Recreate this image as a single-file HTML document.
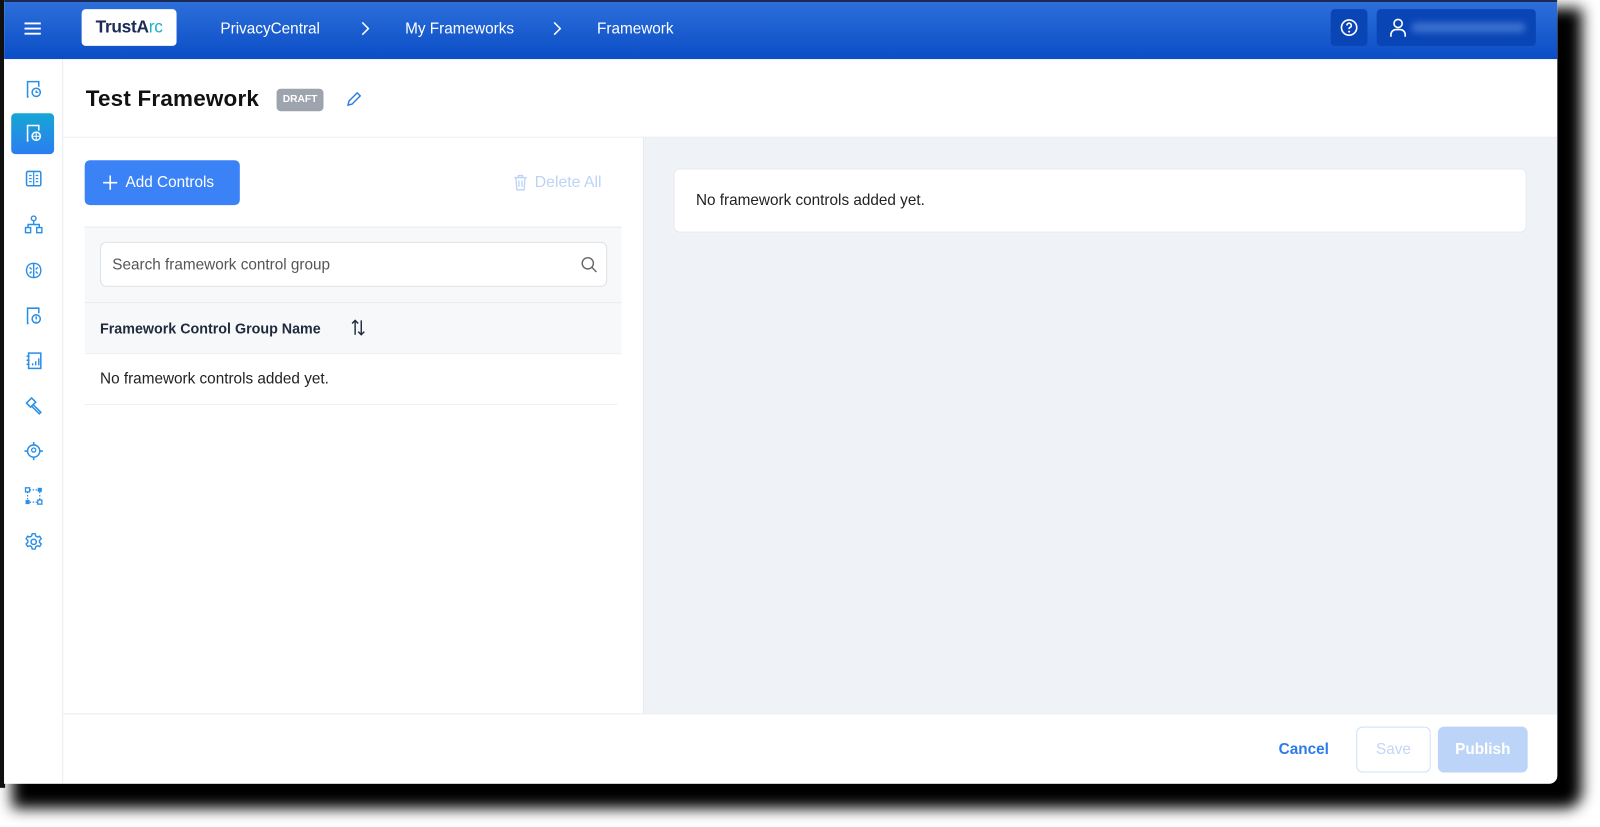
<!DOCTYPE html>
<html><head><meta charset="utf-8">
<style>
*{box-sizing:border-box;margin:0;padding:0}
html,body{width:1600px;height:827px;overflow:hidden;background:#fff;font-family:"Liberation Sans",sans-serif}
#s{position:absolute;left:0;top:0;width:1568px;height:810px;transform:scale(1.0205);transform-origin:0 0}
.abs{position:absolute}
#win{position:absolute;left:4px;top:0;width:1522px;height:768px;background:#fff;border-radius:0 0 8px 0;box-shadow:16px 16px 14px 8px #000;overflow:hidden}
#edge{position:absolute;left:0;top:0;width:5px;height:772px;background:#111}
.hdr{left:0;top:0;width:1522px;height:58px;background:linear-gradient(180deg,#2c6fda,#0b4dc6);border-top:2px solid #1a2a55}
.bc{color:#fff;font-size:15px;top:18px}
.side{left:0;top:58px;width:58px;height:710px;background:#fff;border-right:1px solid #e6e9ef}
.ic{position:absolute;left:19px;width:20px;height:20px}
.t{color:#222}
</style></head><body>
<div id="s">
<div id="edge"></div>
<div id="win">
 <div class="abs hdr">
  <svg class="abs" style="left:19px;top:18px" width="18" height="16" viewBox="0 0 18 16"><path d="M1 3h16M1 8h16M1 13h16" stroke="#fff" stroke-width="1.8"/></svg>
  <div class="abs" style="left:76px;top:7px;width:93px;height:36px;background:#fff;border-radius:4px;text-align:center;line-height:36px;font-size:17px;font-weight:bold;color:#1b2a56;letter-spacing:-0.3px">TrustA<span style="color:#1ab1c9;font-weight:normal">rc</span></div>
  <div class="abs bc" style="left:212px">PrivacyCentral</div>
  <svg class="abs" style="left:350px;top:19px" width="8" height="14" viewBox="0 0 8 14"><path d="M1 1l6 6-6 6" fill="none" stroke="#fff" stroke-width="1.5"/></svg>
  <div class="abs bc" style="left:393px">My Frameworks</div>
  <svg class="abs" style="left:538px;top:19px" width="8" height="14" viewBox="0 0 8 14"><path d="M1 1l6 6-6 6" fill="none" stroke="#fff" stroke-width="1.5"/></svg>
  <div class="abs bc" style="left:581px">Framework</div>
  <div class="abs" style="left:1300px;top:7px;width:36px;height:36px;background:#0a45b6;border-radius:4px">
   <svg class="abs" style="left:9px;top:9px" width="18" height="18" viewBox="0 0 18 18"><circle cx="9" cy="9" r="7.5" fill="none" stroke="#fff" stroke-width="1.6"/><path d="M6.8 7a2.2 2.2 0 1 1 3 2c-.7.3-.8.8-.8 1.5" fill="none" stroke="#fff" stroke-width="1.6"/><circle cx="9" cy="13" r="1" fill="#fff"/></svg>
  </div>
  <div class="abs" style="left:1345px;top:7px;width:156px;height:36px;background:#0a45b6;border-radius:4px">
   <svg class="abs" style="left:12px;top:8px" width="18" height="20" viewBox="0 0 18 20"><circle cx="9" cy="6" r="4" fill="none" stroke="#fff" stroke-width="1.6"/><path d="M2 19v-2a5 5 0 0 1 5-5h4a5 5 0 0 1 5 5v2" fill="none" stroke="#fff" stroke-width="1.6"/></svg>
   <div class="abs" style="left:34px;top:13px;width:112px;height:10px;background:#3b6fcf;border-radius:5px;filter:blur(3px)"></div>
  </div>
 </div>
 <div class="abs side">
  <svg class="ic" style="top:19px" viewBox="0 0 20 20"><path d="M5 18H4V3h11v5" fill="none" stroke="#2b8fe6" stroke-width="1.5"/><circle cx="12.5" cy="13.5" r="4" fill="none" stroke="#2b8fe6" stroke-width="1.5"/><path d="M12.5 11.5v2h2" fill="none" stroke="#2b8fe6" stroke-width="1.3"/></svg>
  <div class="abs" style="left:7px;top:53px;width:42px;height:40px;border-radius:4px;background:linear-gradient(180deg,#16a6d4,#2b7ef1)"></div>
  <svg class="ic" style="top:62px" viewBox="0 0 20 20"><path d="M5 18H4V3h11v5" fill="none" stroke="#fff" stroke-width="1.5"/><circle cx="12.5" cy="13.5" r="4" fill="none" stroke="#fff" stroke-width="1.5"/><path d="M8.5 13.5h8M12.5 9.5v8" stroke="#fff" stroke-width="1"/></svg>
  <svg class="ic" style="top:107px" viewBox="0 0 20 20"><rect x="3" y="3" width="14" height="14" rx="1.5" fill="none" stroke="#2b8fe6" stroke-width="1.5"/><path d="M10 3v14M5.5 7h2.5M5.5 10h2.5M5.5 13h2.5M12 7h2.5M12 10h2.5M12 13h2.5" stroke="#2b8fe6" stroke-width="1.2"/></svg>
  <svg class="ic" style="top:152px" viewBox="0 0 20 20"><circle cx="10" cy="4" r="2.3" fill="none" stroke="#2b8fe6" stroke-width="1.4"/><rect x="2" y="13" width="5" height="5" fill="none" stroke="#2b8fe6" stroke-width="1.4"/><rect x="13" y="13" width="5" height="5" fill="none" stroke="#2b8fe6" stroke-width="1.4"/><path d="M10 6.3V10M4.5 13v-3h11v3" fill="none" stroke="#2b8fe6" stroke-width="1.4"/></svg>
  <svg class="ic" style="top:197px" viewBox="0 0 20 20"><path d="M10 3c-4 0-7 2.5-7 7s3 7 7 7 7-2.5 7-7-3-7-7-7zM10 3v14M6 7l2 2M14 7l-2 2M6 13l2-2M14 13l-2-2" fill="none" stroke="#2b8fe6" stroke-width="1.4"/></svg>
  <svg class="ic" style="top:241px" viewBox="0 0 20 20"><path d="M5 18H4V3h11v5" fill="none" stroke="#2b8fe6" stroke-width="1.5"/><circle cx="12.5" cy="13.5" r="4" fill="none" stroke="#2b8fe6" stroke-width="1.5"/><path d="M12.5 11v3M12.5 15.5v.5" stroke="#2b8fe6" stroke-width="1.4"/></svg>
  <svg class="ic" style="top:285px" viewBox="0 0 20 20"><rect x="5" y="3" width="12" height="15" fill="none" stroke="#2b8fe6" stroke-width="1.5"/><path d="M3 6h3M3 10h3M3 14h3M9 15v-2M12 15v-4M15 15V8" stroke="#2b8fe6" stroke-width="1.4"/></svg>
  <svg class="ic" style="top:330px" viewBox="0 0 20 20"><path d="M3 7l5-5 4 4-5 5zM9.5 8.5L17 16l-1.5 1.5L8 10" fill="none" stroke="#2b8fe6" stroke-width="1.5"/></svg>
  <svg class="ic" style="top:374px" viewBox="0 0 20 20"><circle cx="10" cy="10" r="6" fill="none" stroke="#2b8fe6" stroke-width="1.5"/><circle cx="10" cy="9" r="2" fill="none" stroke="#2b8fe6" stroke-width="1.3"/><path d="M10 1v3M10 16v3M1 10h3M16 10h3" stroke="#2b8fe6" stroke-width="1.5"/></svg>
  <svg class="ic" style="top:418px" viewBox="0 0 20 20"><rect x="2" y="2" width="4" height="4" fill="none" stroke="#2b8fe6" stroke-width="1.3"/><rect x="14" y="2" width="4" height="4" fill="#2b8fe6"/><rect x="2" y="14" width="4" height="4" fill="#2b8fe6"/><rect x="14" y="14" width="4" height="4" fill="none" stroke="#2b8fe6" stroke-width="1.3"/><path d="M6 4h8M6 16h8M4 6v8M16 6v8" stroke="#2b8fe6" stroke-width="1.2" stroke-dasharray="1.5 1.5"/></svg>
  <svg class="ic" style="top:463px" viewBox="0 0 20 20"><circle cx="10" cy="10" r="2.6" fill="none" stroke="#2b8fe6" stroke-width="1.5"/><path d="M8.5 2h3l.5 2.2 1.8 1 2.1-.8 1.5 2.6-1.7 1.5v2l1.7 1.5-1.5 2.6-2.1-.8-1.8 1-.5 2.2h-3l-.5-2.2-1.8-1-2.1.8-1.5-2.6 1.7-1.5v-2L2.6 7l1.5-2.6 2.1.8 1.8-1z" fill="none" stroke="#2b8fe6" stroke-width="1.4" stroke-linejoin="round"/></svg>
 </div>
 <div class="abs" style="left:58px;top:58px;width:1464px;height:77px;background:#fff;border-bottom:1px solid #e8ebf0">
  <div class="abs" style="left:22px;top:26px;font-size:22px;font-weight:600;color:#111;letter-spacing:0.2px">Test Framework</div>
  <div class="abs" style="left:209px;top:29px;width:46px;height:22px;background:#9ea4ae;border-radius:4px;color:#fff;font-size:10px;font-weight:bold;text-align:center;line-height:22px">DRAFT</div>
  <svg class="abs" style="left:277px;top:31px" width="16" height="16" viewBox="0 0 16 16"><path d="M2 14l1-4 8-8 3 3-8 8z" fill="none" stroke="#2b7be8" stroke-width="1.4"/></svg>
 </div>
 <div class="abs" style="left:58px;top:135px;width:569px;height:564px;background:#fff;border-right:1px solid #e6e9ef">
  <div class="abs" style="left:21px;top:22px;width:152px;height:44px;background:#3b82f6;border-radius:5px;color:#fff;font-size:15px;line-height:44px">
   <svg class="abs" style="left:18px;top:15px" width="14" height="14" viewBox="0 0 14 14"><path d="M7 0v14M0 7h14" stroke="#fff" stroke-width="1.6"/></svg>
   <span class="abs" style="left:40px">Add Controls</span></div>
  <svg class="abs" style="left:441px;top:36px" width="14" height="16" viewBox="0 0 14 16"><path d="M1 3h12M5 3V1h4v2M2.5 3l1 12h7l1-12M5.5 6v6M8.5 6v6" fill="none" stroke="#bcd3f7" stroke-width="1.3"/></svg>
  <div class="abs" style="left:462px;top:35px;font-size:15.5px;color:#bcd3f7">Delete All</div>
  <div class="abs" style="left:21px;top:87px;width:526px;height:75px;background:#f7f8fa;border-top:1px solid #e8ebf0"></div>
  <div class="abs" style="left:36px;top:102px;width:497px;height:44px;background:#fff;border:1px solid #dde2e8;border-radius:6px">
   <div class="abs" style="left:11px;top:13px;font-size:15px;color:#555">Search framework control group</div>
   <svg class="abs" style="left:470px;top:13px" width="17" height="17" viewBox="0 0 17 17"><circle cx="7" cy="7" r="5.5" fill="none" stroke="#666" stroke-width="1.4"/><path d="M11 11l4.5 4.5" stroke="#666" stroke-width="1.4"/></svg>
  </div>
  <div class="abs" style="left:21px;top:161px;width:526px;height:51px;background:#f7f8fa;border-top:1px solid #e8ebf0;border-bottom:1px solid #eceff3">
   <div class="abs" style="left:15px;top:17px;font-size:14px;font-weight:bold;color:#1f2a3c">Framework Control Group Name</div>
   <svg class="abs" style="left:261px;top:15px" width="14" height="18" viewBox="0 0 14 18"><path d="M4 16V2M1 5l3-3 3 3M10 2v14M7 13l3 3 3-3" fill="none" stroke="#1f2a3c" stroke-width="1.4"/></svg>
  </div>
  <div class="abs" style="left:21px;top:212px;width:522px;height:50px;border-bottom:1px solid #eceff3">
   <div class="abs t" style="left:15px;top:16px;font-size:15px">No framework controls added yet.</div>
  </div>
 </div>
 <div class="abs" style="left:627px;top:135px;width:895px;height:564px;background:#eff3f8">
  <div class="abs" style="left:29px;top:30px;width:836px;height:63px;background:#fff;border-radius:6px;border:1px solid #e6eaf0">
   <div class="abs t" style="left:21px;top:22px;font-size:15px">No framework controls added yet.</div>
  </div>
 </div>
 <div class="abs" style="left:58px;top:699px;width:1464px;height:69px;background:#fff;border-top:1px solid #e8ebf0">
  <div class="abs" style="left:1191px;top:26px;font-size:15px;font-weight:bold;color:#2b7be8">Cancel</div>
  <div class="abs" style="left:1267px;top:12px;width:73px;height:45px;border:1px solid #cfe0fb;border-radius:6px;color:#c3d6f7;font-size:15px;text-align:center;line-height:43px">Save</div>
  <div class="abs" style="left:1347px;top:12px;width:88px;height:45px;background:#bcd4f8;border-radius:6px;color:#fff;font-size:15px;font-weight:bold;text-align:center;line-height:45px">Publish</div>
 </div>
</div>
</div>
</body></html>
